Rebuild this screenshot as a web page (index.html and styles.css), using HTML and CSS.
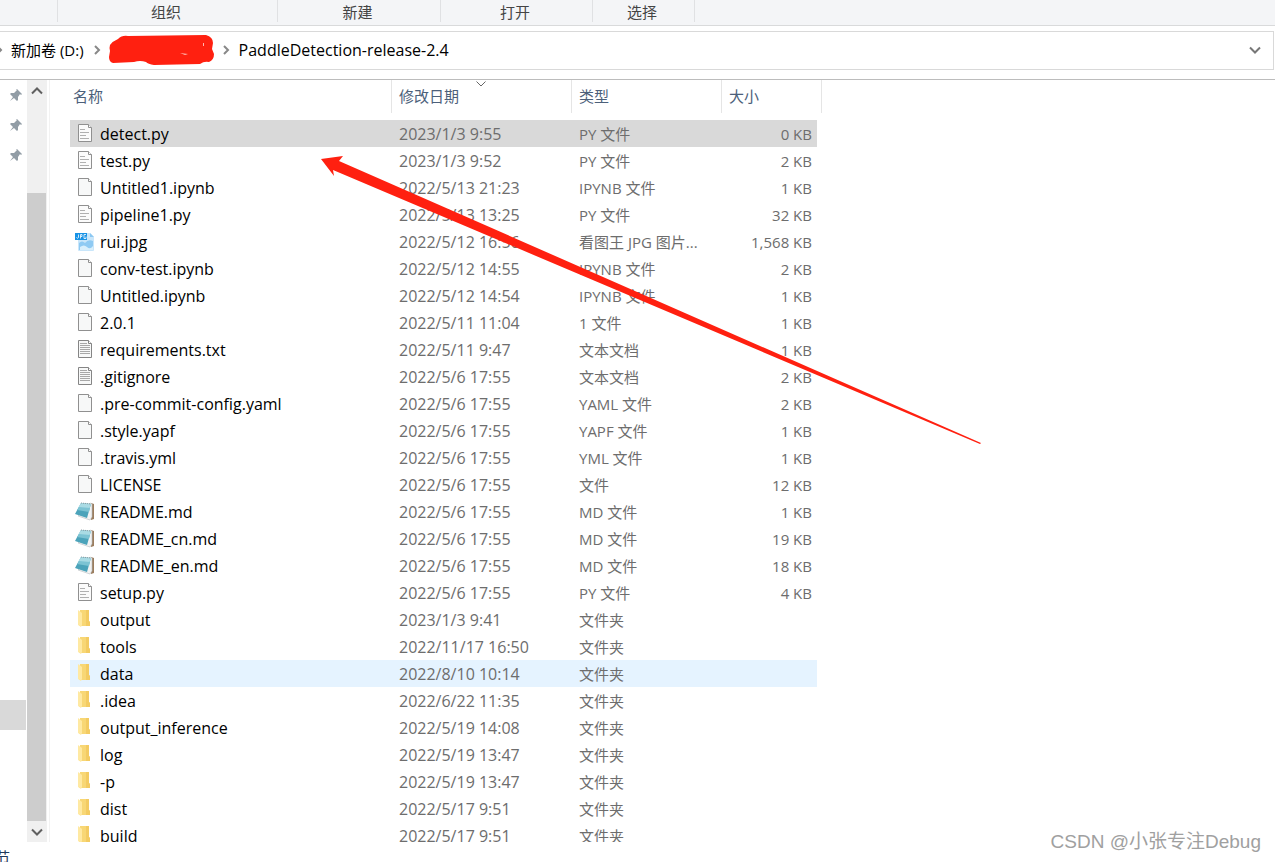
FILE: index.html
```html
<!DOCTYPE html>
<html lang="zh-CN">
<head>
    <meta charset="UTF-8">
    <title>PaddleDetection-release-2.4</title>
    <link rel="stylesheet" href="styles.css">
</head>
<body>
<svg class="defs" aria-hidden="true">
    <symbol id="icon-file" viewBox="0 0 20 20">
        <path d="M3.5 1.5h10l3 3v14h-13z" fill="#f7f8f8" stroke="#909090"/>
        <path d="M13.5 1.5v3h3" fill="#fff" stroke="#909090"/>
    </symbol>
    <symbol id="icon-code" viewBox="0 0 20 20">
        <path d="M3.5 1.5h10l3 3v14h-13z" fill="#fbfbfb" stroke="#909090"/>
        <path d="M13.5 1.5v3h3" fill="#fff" stroke="#909090"/>
        <path d="M5 6.5h5M5 9.5h9M5 12.5h6M5 15.5h9" stroke="#b0b0b0"/>
    </symbol>
    <symbol id="icon-text" viewBox="0 0 20 20">
        <path d="M3.5 1.5h10l3 3v14h-13z" fill="#f7f8f8" stroke="#858585"/>
        <path d="M13.5 1.5v3h3" fill="#fff" stroke="#858585"/>
        <path d="M5 4.5h7M5 6.5h10M5 8.5h10M5 10.5h10M5 12.5h10M5 14.5h10" stroke="#a8a8a8"/>
    </symbol>
    <symbol id="icon-jpg" viewBox="0 0 20 20">
        <path d="M3 2h12l4 4v13q0 1-1 1H4q-1 0-1-1z" fill="#c9e6fa"/>
        <path d="M15 2v4h4z" fill="#8cc8f2"/>
        <path d="M4 12q3-3 6 0 3-4 8-2v9H4z" fill="#8fcaf3"/>
        <path d="M5 16q4-3 7 0t6-1v4H5z" fill="#d9effc"/>
        <path d="M0 2h12v7H0z" fill="#1792e5"/>
        <path d="M3.500 3.500v3q-1 1.500-2 0M5.500 7.500v-4h1.500v2h-1.500M11 3.500H9v4h2v-2" fill="none" stroke="#fff" stroke-width=".8"/>
    </symbol>
    <symbol id="icon-note" viewBox="0 0 20 20">
        <path d="M16 2l3 1v15l-3 1z" fill="#9b7d5e"/>
        <path d="M15 2l2 1v13l-2 3-12-4z" fill="#f3f3f3" stroke="#b5bcc0" stroke-width=".6"/>
        <path d="M6 2l10 1-4 14-12-4z" fill="#4ba3ba"/>
        <path d="M6 2l10 1-2 6-11-2z" fill="#a9dbe4"/>
        <path d="M4 6l11 1-1 4-12-2z" fill="#7cc3d3"/>
        <path d="M6 2l10 1" stroke="#8a9ba0" stroke-dasharray="1 1"/>
    </symbol>
    <symbol id="icon-folder" viewBox="0 0 20 20">
        <path d="M5 1h9v11l1 1v4H4z" fill="#f8d775"/>
        <path d="M11 1h3v11l1 1v4h-4z" fill="#f3cb62"/>
        <path d="M3 1l4 3v12l-1 2-3-2z" fill="#ffe9a2"/>
    </symbol>
    <symbol id="icon-pin" viewBox="0 0 14 14">
        <path d="M8 1l5 5-1 1-1-1-2 3v3l-1 1-3-3-4 3 3-4-3-3 1-1h3l3-3-1-1z" fill="#929da6"/>
    </symbol>
    <symbol id="icon-down" viewBox="0 0 12 12">
        <path d="M1 3.500l5 5 5-5" fill="none" stroke="currentColor" stroke-width="2"/>
    </symbol>
    <symbol id="icon-up" viewBox="0 0 12 12">
        <path d="M1 8.500l5-5 5 5" fill="none" stroke="currentColor" stroke-width="2"/>
    </symbol>
    <symbol id="icon-next" viewBox="0 0 8 12">
        <path d="M2 2l4 4-4 4" fill="none" stroke="currentColor" stroke-width="2"/>
    </symbol>
</svg>

<div class="window">
    <div class="ribbon">
        <span class="group start"></span>
        <span class="group organize">组织</span>
        <span class="group new">新建</span>
        <span class="group open">打开</span>
        <span class="group select">选择</span>
    </div>

    <nav class="address">
        <svg class="next first"><use href="#icon-next"/></svg>
        <a href="#">新加卷 (D:)</a>
        <svg class="next"><use href="#icon-next"/></svg>
        <svg class="scribble" viewBox="0 0 105 30">
            <path d="M1 10Q4 6 9 4 13 0 19 1L97 0Q104 2 104 8L103 14 105 19Q105 25 100 27 95 26 91 29L45 30Q39 29 37 27 31 25 25 27L4 28Q0 27 0 22L1 16Q0 13 1 10z" fill="#ff2010"/>
            <path d="M71 18l8 1-3 1zM94 8h1v3h-1z" fill="#ffb8b0"/>
        </svg>
        <svg class="next"><use href="#icon-next"/></svg>
        <a class="folder" href="#">PaddleDetection-release-2.4</a>
        <button class="history" aria-label="历史"><svg><use href="#icon-down"/></svg></button>
    </nav>

    <main>
        <div class="sidebar">
            <svg class="pin"><use href="#icon-pin"/></svg>
            <svg class="pin"><use href="#icon-pin"/></svg>
            <svg class="pin"><use href="#icon-pin"/></svg>
            <div class="current"></div>
        </div>
        <div class="scrollbar">
            <button aria-label="向上"><svg><use href="#icon-up"/></svg></button>
            <div class="thumb"></div>
            <button aria-label="向下"><svg><use href="#icon-down"/></svg></button>
        </div>
        <div class="content">
            <table>
                <thead>
                    <tr>
                        <th class="name"><span>名称</span></th>
                        <th class="date"><span>修改日期</span><svg class="sort" viewBox="0 0 10 6"><path d="M0.500 0.500l4.500 4.500 4.500-4.500" fill="none" stroke="#666"/></svg></th>
                        <th class="type"><span>类型</span></th>
                        <th class="size"><span>大小</span></th>
                    </tr>
                </thead>
                <tbody id="files"></tbody>
            </table>
        </div>
    </main>

    <footer><span>节</span></footer>

    <svg class="arrow" viewBox="0 0 660 288">
        <path d="M0 3L22 0 18 5 660 287 659 288 12 14 13 20z" fill="#ff2010"/>
    </svg>
    <div class="watermark">CSDN @小张专注Debug</div>
</div>

<script>
  // icon, name, date, type, size, row state
  const files = [
    ['code', 'detect.py', '2023/1/3 9:55', 'PY 文件', '0 KB', 'selected'],
    ['code', 'test.py', '2023/1/3 9:52', 'PY 文件', '2 KB'],
    ['file', 'Untitled1.ipynb', '2022/5/13 21:23', 'IPYNB 文件', '1 KB'],
    ['code', 'pipeline1.py', '2022/5/13 13:25', 'PY 文件', '32 KB'],
    ['jpg', 'rui.jpg', '2022/5/12 16:56', '看图王 JPG 图片...', '1,568 KB'],
    ['file', 'conv-test.ipynb', '2022/5/12 14:55', 'IPYNB 文件', '2 KB'],
    ['file', 'Untitled.ipynb', '2022/5/12 14:54', 'IPYNB 文件', '1 KB'],
    ['file', '2.0.1', '2022/5/11 11:04', '1 文件', '1 KB'],
    ['text', 'requirements.txt', '2022/5/11 9:47', '文本文档', '1 KB'],
    ['text', '.gitignore', '2022/5/6 17:55', '文本文档', '2 KB'],
    ['file', '.pre-commit-config.yaml', '2022/5/6 17:55', 'YAML 文件', '2 KB'],
    ['file', '.style.yapf', '2022/5/6 17:55', 'YAPF 文件', '1 KB'],
    ['file', '.travis.yml', '2022/5/6 17:55', 'YML 文件', '1 KB'],
    ['file', 'LICENSE', '2022/5/6 17:55', '文件', '12 KB'],
    ['note', 'README.md', '2022/5/6 17:55', 'MD 文件', '1 KB'],
    ['note', 'README_cn.md', '2022/5/6 17:55', 'MD 文件', '19 KB'],
    ['note', 'README_en.md', '2022/5/6 17:55', 'MD 文件', '18 KB'],
    ['code', 'setup.py', '2022/5/6 17:55', 'PY 文件', '4 KB'],
    ['folder', 'output', '2023/1/3 9:41', '文件夹', ''],
    ['folder', 'tools', '2022/11/17 16:50', '文件夹', ''],
    ['folder', 'data', '2022/8/10 10:14', '文件夹', '', 'hover'],
    ['folder', '.idea', '2022/6/22 11:35', '文件夹', ''],
    ['folder', 'output_inference', '2022/5/19 14:08', '文件夹', ''],
    ['folder', 'log', '2022/5/19 13:47', '文件夹', ''],
    ['folder', '-p', '2022/5/19 13:47', '文件夹', ''],
    ['folder', 'dist', '2022/5/17 9:51', '文件夹', ''],
    ['folder', 'build', '2022/5/17 9:51', '文件夹', ''],
  ];

  document.querySelector('#files').innerHTML = files.map(([icon, name, date, type, size, state]) => `
    <tr class="${state || ''}">
      <td class="wide"><div class="file"><svg><use href="#icon-${icon}"/></svg>${name}</div></td>
      <td class="wide">${date}</td>
      <td>${type}</td>
      <td>${size}</td>
    </tr>`).join('');
</script>
</body>
</html>
```
FILE: styles.css
```css
* {
    box-sizing: border-box;
}

body {
    margin: 0;
    font-family: "Open Sans", "Noto Sans CJK SC", sans-serif;
    font-size: 15px;
    line-height: 20px;
    color: #000;
    background-color: #fff;
}

button {
    display: flex;
    align-items: center;
    justify-content: center;
    padding: 0;
    border: 0;
    background: none;
    color: inherit;
}

a {
    color: inherit;
    text-decoration: none;
}

.defs {
    display: none;
}

.window {
    position: relative;
    display: flex;
    flex-flow: column nowrap;
    height: 100vh;
    overflow: hidden;
}

/* ribbon */

.ribbon {
    display: flex;
    flex: none;
    height: 26px;
    padding-bottom: 3px;
    background-color: #f4f5f7;
    border-bottom: 1px solid #d9dadb;
    color: #444;
}

.group {
    padding: 2px 3px 0 0;
    border-right: 1px solid #e0e1e3;
    text-align: center;
}

.start {
    width: 58px;
}

.organize {
    width: 220px;
}

.new {
    width: 163px;
}

.open {
    width: 152px;
}

.select {
    width: 102px;
}

/* address bar */

.address {
    display: flex;
    flex: none;
    align-items: center;
    height: 39px;
    margin: 5px 1px 9px 0;
    padding-bottom: 2px;
    border: 1px solid #d9d9d9;
    border-left: 0;
}

.next {
    flex: none;
    width: 8px;
    height: 12px;
    margin: 0 9px;
    color: #888;
}

.first {
    margin: 0 8px 0 -5px;
}

.scribble {
    width: 105px;
    height: 30px;
    margin: 0 -1px;
}

.folder {
    font-size: 16px;
}

.history {
    width: 36px;
    height: 36px;
    margin-left: auto;
    color: #777;
}

.history svg,
.scrollbar svg {
    width: 12px;
    height: 12px;
}

/* panes */

main {
    display: flex;
    flex: 1 1 0;
    min-height: 0;
    border-top: 1px solid #bcbcbc;
}

.sidebar {
    display: flex;
    flex-flow: column nowrap;
    width: 27px;
}

.pin {
    flex: none;
    width: 14px;
    height: 14px;
    margin: 8px 0 8px 9px;
}

.current {
    width: 26px;
    height: 30px;
    margin-top: auto;
    margin-bottom: 112px;
    background-color: #d9d9d9;
}

.scrollbar {
    display: flex;
    flex-flow: column nowrap;
    width: 20px;
    background-color: #f0f0f0;
    color: #606060;
}

.scrollbar button {
    height: 21px;
}

.thumb {
    flex: 1 1 auto;
    margin: 92px 1px 0 0;
    background-color: #cdcdcd;
}

.content {
    flex: 1 1 0;
    margin-left: 2px;
    padding-left: 20px;
    border-left: 1px solid #f2f2f2;
    overflow: hidden;
}

/* file list */

table {
    width: 752px;
    table-layout: fixed;
    border-collapse: separate;
    border-spacing: 0;
}

th {
    position: relative;
    padding: 0 0 7px;
    font-weight: normal;
    text-align: left;
    color: #4c607a;
}

th span {
    display: block;
    height: 33px;
    padding: 6px 7px 0;
    border-right: 1px solid #e5e5e5;
}

.name {
    width: 322px;
}

.name span {
    padding-left: 3px;
}

.date {
    width: 180px;
}

.type {
    width: 150px;
}

.size {
    width: 100px;
}

.sort {
    position: absolute;
    top: 1px;
    left: 84px;
    width: 10px;
    height: 6px;
}

td {
    height: 27px;
    padding: 0 7px;
    white-space: nowrap;
    color: #6d6d6d;
}

td:first-child {
    padding-left: 5px;
    color: #000;
}

td:last-child {
    padding-right: 5px;
    border-right: 5px solid transparent;
    background-clip: padding-box;
    text-align: right;
}

.wide {
    font-size: 16px;
}

.file {
    display: flex;
    align-items: center;
}

.file svg {
    width: 20px;
    height: 20px;
    margin: 0 5px 2px 0;
}

.selected td {
    background-color: #d9d9d9;
}

.hover td {
    background-color: #e5f3ff;
}

/* status bar */

footer {
    flex: none;
    height: 20px;
    padding-top: 5px;
    color: #1e395b;
}

footer span {
    display: block;
    width: 23px;
    margin-left: -5px;
}

/* drawn over the window */

.arrow {
    position: absolute;
    top: 156px;
    left: 321px;
    width: 660px;
    height: 288px;
}

.watermark {
    position: absolute;
    right: 14px;
    bottom: 8px;
    font-family: "Liberation Sans", "Noto Sans CJK SC", sans-serif;
    font-size: 19px;
    line-height: 24px;
    color: #a0a0a0;
}
```
